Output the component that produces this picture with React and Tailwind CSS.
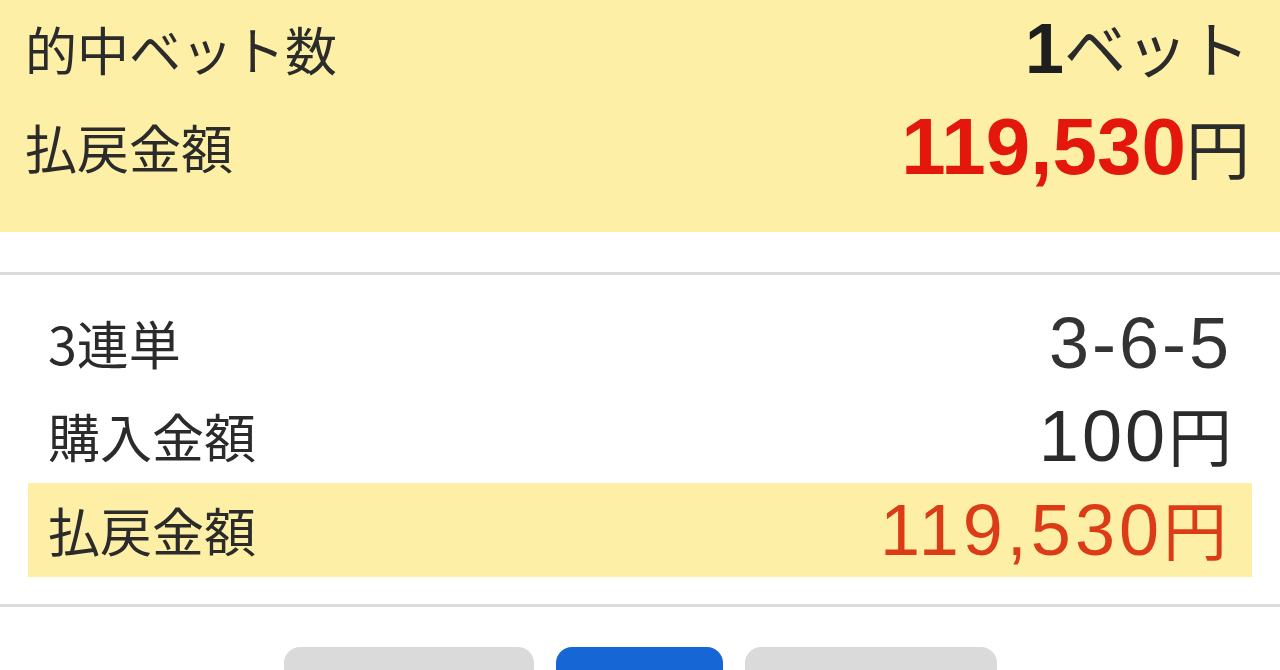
const jp = "font-['Noto_Sans_CJK_JP','Noto_Sans_CJK_SC',sans-serif]";
const num = "font-['Liberation_Sans','Noto_Sans_CJK_JP',sans-serif]";

const Row = ({ label, children, className = '' }) => (
  <div className={`flex items-center justify-between ${className}`}>
    <span className={`${jp} text-[52px] leading-none text-[#2b2b2b]`}>{label}</span>
    <span className="flex items-baseline leading-none">{children}</span>
  </div>
);

const App = () => {
  return (
    <div className="h-[670px] w-full overflow-hidden bg-white">
      {/* summary */}
      <div className="bg-[#fdf0a6] pl-[25px] pr-[30px] pb-[36px]">
        <Row label="的中ベット数" className="h-[97px]">
          <span className={`${num} text-[70px] font-bold text-[#1e1e1e]`}>1</span>
          <span className={`${jp} text-[62px] text-[#2b2b2b]`}>ベット</span>
        </Row>
        <Row label="払戻金額" className="h-[99px]">
          <span className={`${num} text-[80px] font-bold text-[#e3170b]`}>119,530</span>
          <span className={`${jp} text-[64px] text-[#2b2b2b]`}>円</span>
        </Row>
      </div>

      <div className="h-[40px]" />
      <div className="h-[3px] bg-[#dcdcdc]" />

      {/* detail */}
      <div className="px-[28px] pt-[22px] pb-[27px]">
        <Row label="3連単" className="h-[92px] px-[20px]">
          <span className={`${num} text-[72px] tracking-[3px] text-[#333]`}>3-6-5</span>
        </Row>
        <Row label="購入金額" className="h-[94px] px-[20px]">
          <span className={`${num} text-[72px] tracking-[3px] text-[#2b2b2b]`}>100</span>
          <span className={`${jp} text-[64px] text-[#2b2b2b]`}>円</span>
        </Row>
        <Row label="払戻金額" className="h-[94px] px-[20px] pr-[25px] bg-[#fdf0a6]">
          <span className={`${num} text-[72px] tracking-[4px] text-[#dc3b17]`}>119,530</span>
          <span className={`${jp} text-[64px] text-[#dc3b17]`}>円</span>
        </Row>
      </div>

      <div className="h-[3px] bg-[#dcdcdc]" />

      {/* tabs */}
      <div className="flex justify-center gap-[22px] pt-[40px]">
        <button className="h-[60px] w-[250px] rounded-t-[16px] bg-[#dadada]" />
        <button className="h-[60px] w-[167px] rounded-t-[16px] bg-[#1766d6]" />
        <button className="h-[60px] w-[252px] rounded-t-[16px] bg-[#dadada]" />
      </div>
    </div>
  );
};

export default App;
